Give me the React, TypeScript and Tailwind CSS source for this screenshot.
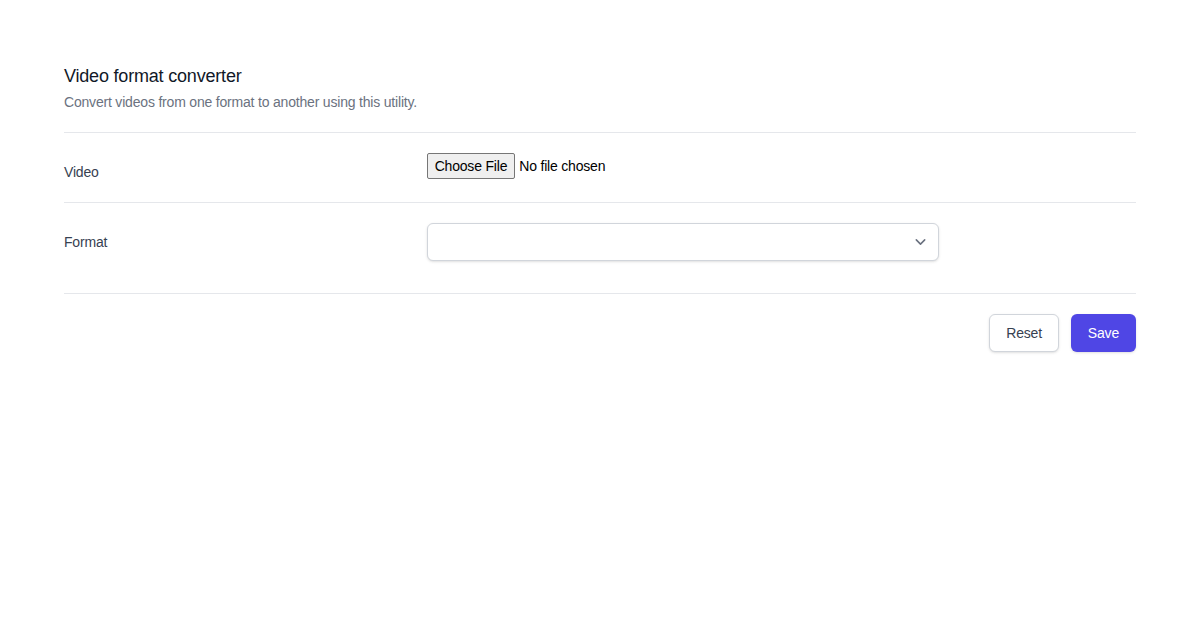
import React from 'react';

export default function App() {
  return (
    <div className="min-h-screen bg-white px-16 pt-16 font-['Liberation_Sans',Arial,sans-serif] tracking-[-0.012em]">
      <form>
        <div className="space-y-5">
          <div>
            <h3 className="text-lg leading-6 font-normal text-[#111827]">Video format converter</h3>
            <p className="mt-1 text-sm leading-5 text-[#6b7280]">
              Convert videos from one format to another using this utility.
            </p>
          </div>

          <div className="space-y-5">
            <div className="grid grid-cols-3 gap-4 items-start border-t border-[#e5e7eb] pt-5">
              <label htmlFor="video" className="block text-sm leading-5 text-[#374151] pt-[9px]">
                Video
              </label>
              <div className="col-span-2">
                <input
                  id="video"
                  type="file"
                  className="block text-sm leading-[normal] text-black file:mr-[4px] file:rounded-[2px] file:border file:border-[#767676] file:bg-[#efefef] file:px-[7px] file:py-[4px] file:text-black"
                />
              </div>
            </div>

            <div className="grid grid-cols-3 gap-4 items-start border-t border-[#e5e7eb] pt-5">
              <label htmlFor="format" className="block text-sm leading-5 text-[#374151] pt-[9px]">
                Format
              </label>
              <div className="col-span-2">
                <div className="relative max-w-lg">
                  <select
                    id="format"
                    className="block w-full appearance-none rounded-md border border-[#d1d5db] bg-white py-2 pl-3 pr-10 text-sm leading-5 text-[#111827] shadow-sm"
                  >
                    <option></option>
                  </select>
                  <svg
                    className="pointer-events-none absolute right-2 top-1/2 -translate-y-1/2 h-[21px] w-[21px] text-[#6b7280]"
                    viewBox="0 0 20 20"
                    fill="none"
                  >
                    <path d="M6 8l4 4 4-4" stroke="currentColor" strokeWidth="1.5" strokeLinecap="round" strokeLinejoin="round" />
                  </svg>
                </div>
              </div>
            </div>
          </div>
        </div>

        <div className="mt-8 border-t border-[#e5e7eb] pt-5">
          <div className="flex justify-end">
            <button
              type="button"
              className="rounded-md border border-[#d1d5db] bg-white py-2 px-4 text-sm leading-5 text-[#374151] shadow-sm"
            >
              Reset
            </button>
            <button
              type="submit"
              className="ml-3 rounded-md border border-transparent bg-[#4f46e5] py-2 px-4 text-sm leading-5 text-white shadow-sm"
            >
              Save
            </button>
          </div>
        </div>
      </form>
    </div>
  );
}
